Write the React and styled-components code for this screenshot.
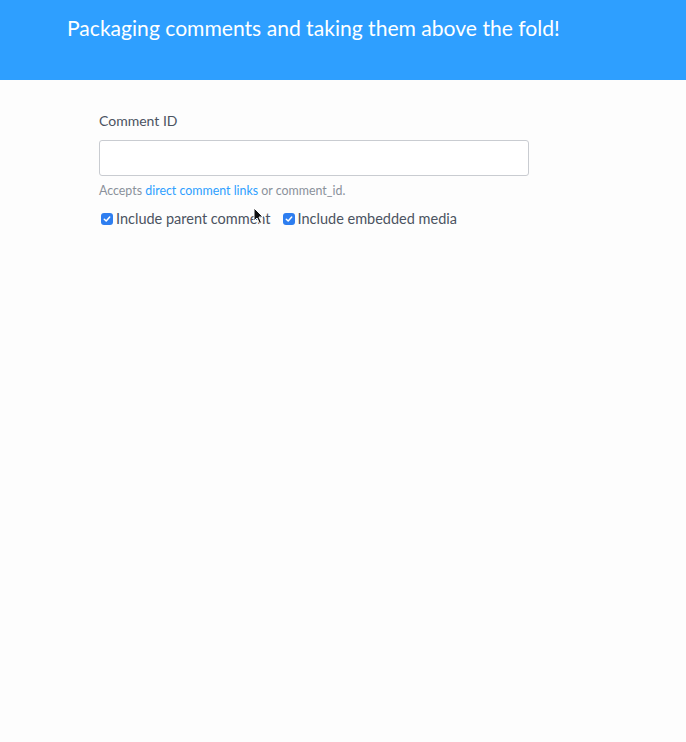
import React from "react";
import styled, { createGlobalStyle } from "styled-components";

const GlobalStyle = createGlobalStyle`
  html, body {
    margin: 0;
    padding: 0;
    background: #fdfdfd;
    font-family: "Lato", "Liberation Sans", sans-serif;
  }
`;

const Page = styled.div`
  position: relative;
  min-height: 742px;
  background: #fdfdfd;
`;

const Header = styled.header`
  height: 80px;
  background: #2e9fff;
  box-sizing: border-box;
  padding: 14px 0 0 67px;
`;

const Title = styled.h1`
  margin: 0;
  color: #fff;
  font-weight: 400;
  font-size: 21.1px;
  line-height: 28px;
`;

const Form = styled.form`
  width: 430px;
  margin-left: 99px;
  padding-top: 32px;
`;

const Label = styled.label`
  display: block;
  color: #4b5361;
  font-size: 14px;
  line-height: 18px;
  margin-bottom: 10px;
`;

const TextInput = styled.input`
  display: block;
  box-sizing: border-box;
  width: 100%;
  height: 36px;
  border: 1px solid #c9ccd1;
  border-radius: 3px;
  background: #fff;
  padding: 0 10px;
  font: inherit;
  outline: none;
`;

const Help = styled.p`
  margin: 7px 0 0;
  color: #8a919b;
  font-size: 12.4px;
  line-height: 16px;
`;

const HelpLink = styled.a`
  color: #2e9fff;
  text-decoration: none;
`;

const Options = styled.div`
  display: flex;
  gap: 10px;
  margin-top: 10px;
`;

const Option = styled.label`
  display: flex;
  align-items: center;
  gap: 3px;
  color: #4b5361;
  font-size: 14.5px;
  line-height: 19px;
  padding-left: 2px;
`;

const Box = styled.span`
  display: inline-flex;
  align-items: center;
  justify-content: center;
  width: 12px;
  height: 12px;
  margin-top: 1px;
  border-radius: 3px;
  background: #2e7ef0;
`;

const Cursor = styled.svg`
  position: absolute;
  left: 253px;
  top: 207px;
`;

const Check = () => (
  <Box>
    <svg width="8" height="8" viewBox="0 0 8 8">
      <path d="M1.3 4.2 L3.2 6 L6.7 2" fill="none" stroke="#fff" strokeWidth="1.5" strokeLinecap="round" strokeLinejoin="round" />
    </svg>
  </Box>
);

export default function App() {
  return (
    <Page>
      <GlobalStyle />
      <Header>
        <Title>Packaging comments and taking them above the fold!</Title>
      </Header>
      <Form onSubmit={e => e.preventDefault()}>
        <Label htmlFor="comment-id">Comment ID</Label>
        <TextInput id="comment-id" type="text" />
        <Help>
          Accepts <HelpLink href="#">direct comment links</HelpLink> or comment_id.
        </Help>
        <Options>
          <Option>
            <Check />
            Include parent comment
          </Option>
          <Option>
            <Check />
            Include embedded media
          </Option>
        </Options>
      </Form>
      <Cursor width="12" height="18" viewBox="0 0 12 18">
        <path d="M1 1 L1 14 L4 11 L6.5 16.5 L8.5 15.5 L6 10 L10 10 Z" fill="#111" stroke="#fff" strokeWidth="1" />
      </Cursor>
    </Page>
  );
}
